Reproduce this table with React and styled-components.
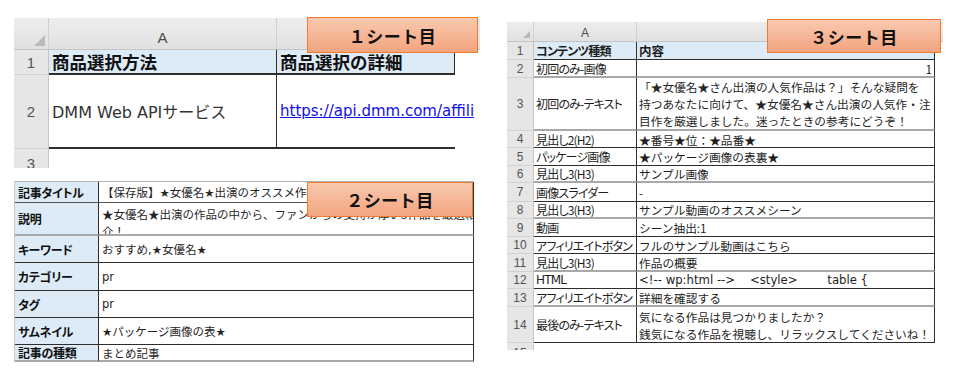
import React from "react";
import styled, { createGlobalStyle } from "styled-components";

const JP = `"Noto Sans CJK JP", "Noto Sans", sans-serif`;
const DARK = "1px solid #2e2e2e";
const DARK2 = "2px solid #2e2e2e";
const SOFT = "2px solid #a8a8a8";

const GlobalStyle = createGlobalStyle`
  body {
    margin: 0;
    background: #fff;
    font-family: ${JP};
  }
`;

const Page = styled.div`
  display: flex;
  width: 960px;
  height: 375px;
  overflow: hidden;
`;

const LeftColumn = styled.div`
  position: relative;
  width: 480px;
  padding: 18px 0 0 14px;
  box-sizing: border-box;
  display: flex;
  flex-direction: column;
  gap: 13px;
`;

const RightColumn = styled.div`
  position: relative;
  flex: 1;
  padding: 22px 0 0 27px;
`;

const Frame = styled.div`
  width: ${(p) => p.$w}px;
  height: ${(p) => p.$h}px;
  overflow: hidden;
  background: #fff;
`;

const HeadBand = styled.div`
  display: grid;
  grid-template-columns: ${(p) => p.$cols};
  height: ${(p) => p.$h}px;
  background: linear-gradient(#ededed, #e1e1e1);
  border-bottom: 1px solid #c4c4c4;
  box-sizing: border-box;
`;

const Corner = styled.div`
  position: relative;
  border-right: 1px solid #d0d0d0;

  &::after {
    content: "";
    position: absolute;
    right: ${(p) => p.$inset}px;
    bottom: ${(p) => p.$inset}px;
    border-style: solid;
    border-width: 0 0 ${(p) => p.$tri}px ${(p) => p.$tri}px;
    border-color: transparent transparent #b9b9b9 transparent;
  }
`;

const ColLabel = styled.div`
  display: flex;
  align-items: flex-end;
  justify-content: center;
  padding-bottom: ${(p) => p.$pb}px;
  border-right: 1px solid #d0d0d0;
  font-family: "Liberation Sans", sans-serif;
  font-size: ${(p) => p.$size}px;
  color: #4a4a4a;
`;

const Row = styled.div`
  display: grid;
  grid-template-columns: ${(p) => p.$cols};
  height: ${(p) => p.$h}px;
`;

const RowNum = styled.div`
  box-sizing: border-box;
  display: flex;
  align-items: center;
  justify-content: center;
  background: #e6e6e6;
  border-right: 1px solid #c4c4c4;
  border-bottom: 1px solid #d2d2d2;
  font-family: "Liberation Sans", sans-serif;
  font-size: ${(p) => p.$size}px;
  color: #555;
`;

const Cell = styled.div`
  box-sizing: border-box;
  display: flex;
  align-items: ${(p) => (p.$top ? "flex-start" : "center")};
  justify-content: ${(p) => (p.$right ? "flex-end" : "flex-start")};
  padding: ${(p) => p.$pad || "0 3px"};
  background: ${(p) => p.$bg || "transparent"};
  border-bottom: ${(p) => p.$bb || "none"};
  border-right: ${(p) => p.$br || "none"};
  font-family: ${(p) => p.$font || JP};
  font-size: ${(p) => p.$size}px;
  font-weight: ${(p) => (p.$bold ? 700 : 400)};
  font-feature-settings: ${(p) => (p.$palt ? '"palt"' : "normal")};
  letter-spacing: ${(p) => p.$ls || 0}px;
  line-height: ${(p) => p.$lh || "normal"};
  color: ${(p) => p.$color || "#262626"};
  white-space: pre;
  overflow: ${(p) => (p.$spill ? "visible" : "hidden")};
`;

const Lines = styled.div`
  display: flex;
  flex-direction: column;
`;

const Link = styled.span`
  color: #1010e8;
  text-decoration: underline;
`;

const Tag = styled.div`
  position: absolute;
  left: ${(p) => p.$x}px;
  top: ${(p) => p.$y}px;
  width: ${(p) => p.$w}px;
  height: ${(p) => p.$h}px;
  box-sizing: border-box;
  display: flex;
  align-items: center;
  justify-content: center;
  background: linear-gradient(#f9c9af, #f3a47f);
  border: 1px solid #ed7d31;
  font-family: ${JP};
  font-size: 17px;
  font-weight: 700;
  color: #111;
  letter-spacing: 0.5px;
`;

/* ---------- sheet 1 ---------- */

const S1_COLS = "35px 228px 178px 25px";

function SheetOne() {
  return (
    <Frame $w={466} $h={150}>
      <HeadBand $cols={S1_COLS} $h={32}>
        <Corner $inset={3} $tri={11} />
        <ColLabel $pb={3} $size={15}>A</ColLabel>
        <ColLabel $pb={3} $size={15} />
        <div />
      </HeadBand>
      <Row $cols={S1_COLS} $h={25}>
        <RowNum $size={15}>1</RowNum>
        <Cell $size={17.5} $bold $bg="#ddebf7" $bb={DARK2} $br={DARK} $color="#111">
          商品選択方法
        </Cell>
        <Cell $size={17.5} $bold $bg="#ddebf7" $bb={DARK2} $br={DARK} $color="#111">
          商品選択の詳細
        </Cell>
        <div />
      </Row>
      <Row $cols={S1_COLS} $h={74}>
        <RowNum $size={15}>2</RowNum>
        <Cell $size={16} $bb={DARK2} $br={DARK} $font={`"DejaVu Sans", ${JP}`} $color="#333">
          DMM Web APIサービス
        </Cell>
        <Cell $size={15} $bb={DARK2} $spill $font={`"DejaVu Sans", ${JP}`}>
          <Link>https://api.dmm.com/affili</Link>
        </Cell>
        <div />
      </Row>
      <Row $cols={S1_COLS} $h={30}>
        <RowNum $size={15}>3</RowNum>
        <Cell />
        <Cell />
        <div />
      </Row>
    </Frame>
  );
}

/* ---------- sheet 2 ---------- */

const S2_COLS = "84px 375px";

const sheetTwoRows = [
  { label: "記事タイトル", value: "【保存版】★女優名★出演のオススメ作品", h: 21, bb: "1px solid #555" },
  {
    label: "説明",
    lines: ["★女優名★出演の作品の中から、ファンからの支持が厚い5作品を厳選紹", "介！"],
    h: 33,
    bb: SOFT,
  },
  { label: "キーワード", value: "おすすめ,★女優名★", h: 27, bb: DARK },
  { label: "カテゴリー", value: "pr", h: 28, bb: DARK },
  { label: "タグ", value: "pr", h: 27, bb: DARK },
  { label: "サムネイル", value: "★パッケージ画像の表★", h: 27, bb: DARK },
  { label: "記事の種類", value: "まとめ記事", h: 17, bb: SOFT },
];

const SheetTwoBox = styled.div`
  width: 459px;
  border-top: 1px solid #b0b0b0;
  border-left: 1px solid #c8c8c8;
  box-sizing: border-box;
`;

function SheetTwo() {
  return (
    <SheetTwoBox>
      {sheetTwoRows.map((r) => (
        <Row key={r.label} $cols={S2_COLS} $h={r.h}>
          <Cell $size={12} $bold $palt $ls={-0.3} $bg="#ddebf7" $bb={r.bb} $br={DARK} $color="#111">
            {r.label}
          </Cell>
          {r.lines ? (
            <Cell $size={11.5} $top $pad="3px 3px 0" $lh="17px" $bb={r.bb} $br={DARK}>
              <Lines>
                {r.lines.map((l) => (
                  <span key={l}>{l}</span>
                ))}
              </Lines>
            </Cell>
          ) : (
            <Cell $size={11.5} $bb={r.bb} $br={DARK} $font={`"DejaVu Sans", ${JP}`}>
              {r.value}
            </Cell>
          )}
        </Row>
      ))}
    </SheetTwoBox>
  );
}

/* ---------- sheet 3 ---------- */

const S3_COLS = "27px 103px 298px 8px";

const sheetThreeRows = [
  { n: 1, a: "コンテンツ種類", b: "内容", h: 18, bb: DARK, head: true },
  { n: 2, a: "初回のみ-画像", b: "1", h: 18, bb: SOFT, right: true },
  {
    n: 3,
    a: "初回のみ-テキスト",
    lines: [
      "「★女優名★さん出演の人気作品は？」そんな疑問を",
      "持つあなたに向けて、★女優名★さん出演の人気作・注",
      "目作を厳選しました。迷ったときの参考にどうぞ！",
    ],
    h: 53,
    bb: SOFT,
  },
  { n: 4, a: "見出し2(H2)", b: "★番号★位：★品番★", h: 17, bb: DARK },
  { n: 5, a: "パッケージ画像", b: "★パッケージ画像の表裏★", h: 18, bb: DARK },
  { n: 6, a: "見出し3(H3)", b: "サンプル画像", h: 17, bb: SOFT },
  { n: 7, a: "画像スライダー", b: "-", h: 19, bb: DARK },
  { n: 8, a: "見出し3(H3)", b: "サンプル動画のオススメシーン", h: 17, bb: SOFT },
  { n: 9, a: "動画", b: "シーン抽出:1", h: 18, bb: DARK },
  { n: 10, a: "アフィリエイトボタン", b: "フルのサンプル動画はこちら", h: 17, bb: DARK },
  { n: 11, a: "見出し3(H3)", b: "作品の概要", h: 18, bb: SOFT },
  { n: 12, a: "HTML", b: "<!-- wp:html -->    <style>        table {", h: 17, bb: DARK, latin: true },
  { n: 13, a: "アフィリエイトボタン", b: "詳細を確認する", h: 18, bb: SOFT },
  {
    n: 14,
    a: "最後のみ-テキスト",
    lines: ["気になる作品は見つかりましたか？", "銭気になる作品を視聴し、リラックスしてくださいね！"],
    h: 36,
    bb: DARK,
  },
];

function SheetThree() {
  return (
    <Frame $w={436} $h={328}>
      <HeadBand $cols={S3_COLS} $h={20}>
        <Corner $inset={3} $tri={7} />
        <ColLabel $pb={1} $size={12}>A</ColLabel>
        <ColLabel $pb={1} $size={12} />
        <div />
      </HeadBand>
      {sheetThreeRows.map((r) => (
        <Row key={r.n} $cols={S3_COLS} $h={r.h}>
          <RowNum $size={12}>{r.n}</RowNum>
          <Cell
            $size={12}
            $bold={r.head}
            $palt
            $ls={-0.8}
            $bg={r.head ? "#ddebf7" : "#fff"}
            $bb={r.bb}
            $br={DARK}
            $pad="0 1px 0 2px"
            $font={r.latin ? `"DejaVu Sans", ${JP}` : JP}
            $color="#1e1e1e"
          >
            {r.a}
          </Cell>
          {r.lines ? (
            <Cell $size={11.7} $lh="17px" $bb={r.bb} $br={DARK} $pad="0 1px 0 2px" $bg="#fff">
              <Lines>
                {r.lines.map((l) => (
                  <span key={l}>{l}</span>
                ))}
              </Lines>
            </Cell>
          ) : (
            <Cell
              $size={r.head ? 12.5 : 11.7}
              $bold={r.head}
              $right={r.right}
              $bg={r.head ? "#ddebf7" : "#fff"}
              $bb={r.bb}
              $br={DARK}
              $pad="0 2px"
              $font={r.latin ? `"DejaVu Sans", ${JP}` : JP}
              $color="#1e1e1e"
            >
              {r.b}
            </Cell>
          )}
          <div />
        </Row>
      ))}
      <Row $cols={S3_COLS} $h={20}>
        <RowNum $size={12}>15</RowNum>
        <Cell />
        <Cell />
        <div />
      </Row>
    </Frame>
  );
}

export default function App() {
  return (
    <>
      <GlobalStyle />
      <Page>
        <LeftColumn>
          <SheetOne />
          <SheetTwo />
          <Tag $x={307} $y={17} $w={171} $h={36}>１シート目</Tag>
          <Tag $x={307} $y={182} $w={166} $h={35}>２シート目</Tag>
        </LeftColumn>
        <RightColumn>
          <SheetThree />
          <Tag $x={287} $y={19} $w={174} $h={34}>３シート目</Tag>
        </RightColumn>
      </Page>
    </>
  );
}
